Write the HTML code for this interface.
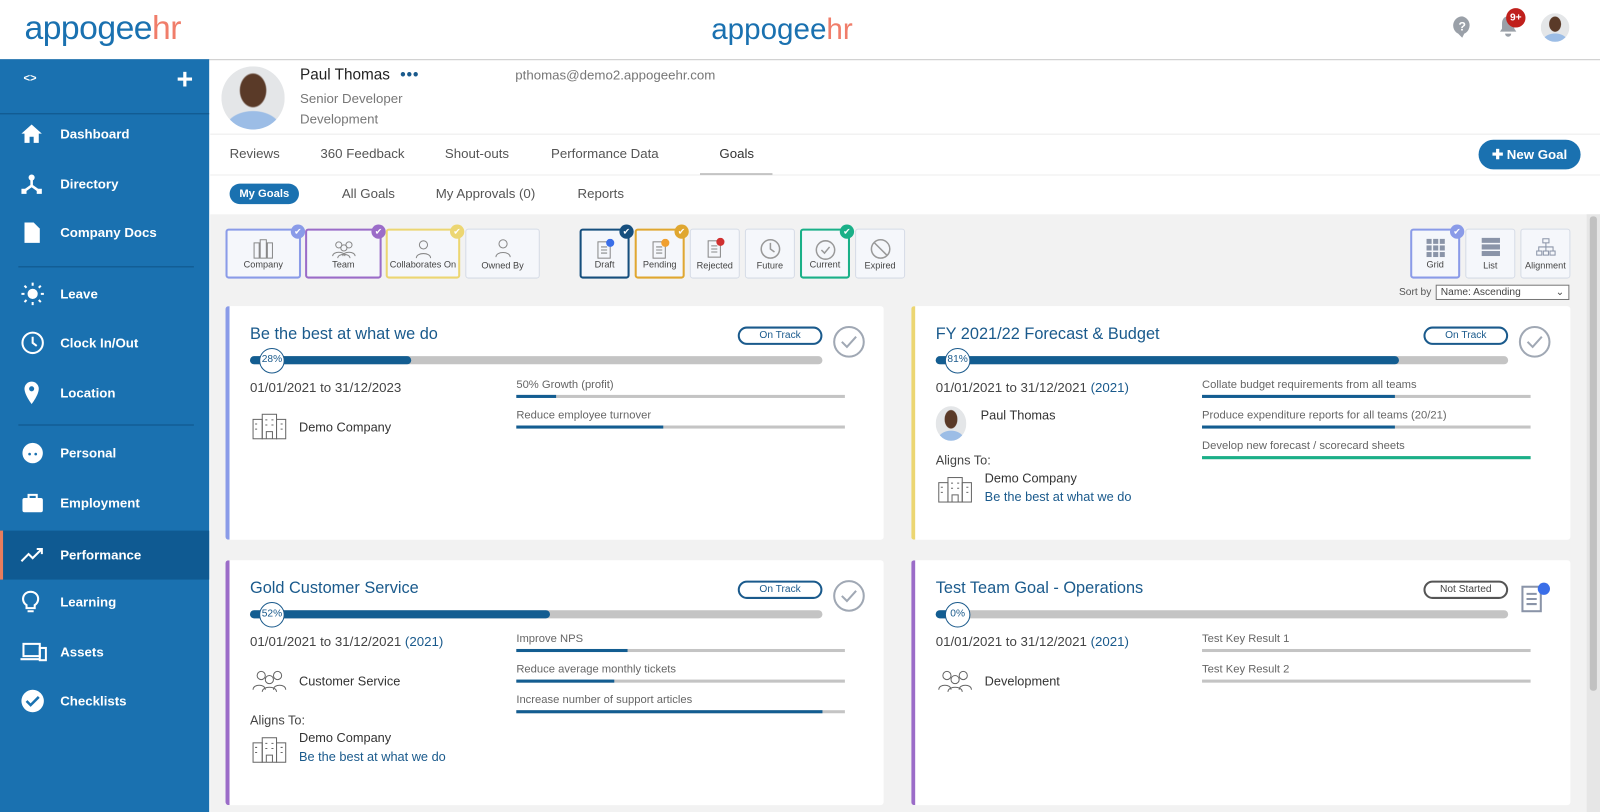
<!DOCTYPE html>
<html><head><meta charset="utf-8"><style>
*{box-sizing:border-box;margin:0;padding:0}
body{width:1600px;height:796px;overflow:hidden;font-family:"Liberation Sans",sans-serif;background:#fff;position:relative;color:#333}
#w{position:absolute;left:0;top:0;width:1568px;height:780px;transform:scale(1.0204);transform-origin:0 0}
.a{position:absolute}
.side{left:0;top:58px;width:205px;height:738px;background:#1a71b0}
.nav{position:absolute;left:0;width:205px;height:48px;color:#fff;font-size:13px;font-weight:bold}
.nav span{position:absolute;left:59px;top:50%;transform:translateY(-50%)}
.nav svg{position:absolute;left:20px;top:50%;transform:translateY(-50%)}
.sep{position:absolute;left:18px;width:172px;height:1px;background:#0f5589}
.tab{position:absolute;top:143px;font-size:13px;color:#555}
.stab{position:absolute;top:182px;font-size:13px;color:#555}
.f{position:absolute;top:224px;height:49px;background:#f5f7fb;border:1px solid #d5dbe6;border-radius:3px;font-size:9px;color:#444;text-align:center}
.f .l{position:absolute;bottom:7px;left:0;right:0}
.f .ic{position:absolute;top:8px;left:50%;transform:translateX(-50%)}
.ck{position:absolute;top:-6px;right:-6px;width:14px;height:14px;border-radius:50%;color:#fff;font-size:9px;line-height:14px;text-align:center}
.card{position:absolute;background:#fff;border-radius:3px;border-left:4px solid}
.t{position:absolute;left:20px;top:19px;font-size:16px;color:#1a5a8c}
.badge{position:absolute;width:83px;height:18px;border:2px solid #1a5a8c;border-radius:9px;font-size:10px;text-align:center;line-height:14px;color:#1a5a8c}
.pb{position:absolute;left:20px;top:49px;width:561px;height:8px;background:#c4c4c4;border-radius:4px}
.pb i{position:absolute;left:0;top:0;height:8px;background:#135d91;border-radius:4px}
.pc{position:absolute;left:29px;top:41px;width:25px;height:25px;border:1.5px solid #1a5a8c;border-radius:50%;background:#fff;font-size:10px;color:#1a5a8c;text-align:center;line-height:22px}
.d{position:absolute;left:20px;top:72px;font-size:13px;color:#444}
.d b{font-weight:normal;color:#1a5a8c}
.kr{position:absolute;width:322px;font-size:11px;color:#666}
.kr i{position:absolute;left:0;top:16px;width:322px;height:3px;background:#c4c4c4}
.kr i u{position:absolute;left:0;top:0;height:3px;background:#135d91}
.txt{position:absolute;font-size:12.5px;color:#333}
.lnk{position:absolute;font-size:12.5px;color:#1a5a8c}
.av{position:absolute;border-radius:50%;background:radial-gradient(ellipse 22% 28% at 50% 38%,#5a3a28 90%,transparent 100%),radial-gradient(ellipse 45% 30% at 50% 100%,#9cbde6 95%,transparent 100%),#e4e6e8}
</style></head><body><div id="w">
<!-- header -->
<div class="a" style="left:24px;top:8px;font-size:33px;color:#1a71b0;letter-spacing:-0.5px">appogee<span style="color:#f07d6a">hr</span></div>
<div class="a" style="left:697px;top:13px;font-size:29px;color:#1a71b0">appogee<span style="color:#f07d6a">hr</span></div>
<div class="a" style="left:0;top:58px;width:1600px;height:1px;background:#c8c8c8"></div>
<svg class="a" style="left:1423px;top:15px" width="20" height="22" viewBox="0 0 20 22"><path d="M10 1a9 9 0 0 0-4 17l4 4 2-4a9 9 0 0 0-2-17z" fill="#9aa0a8"/><text x="10" y="15" font-size="12" font-weight="bold" fill="#fff" text-anchor="middle" font-family="Liberation Sans">?</text></svg>
<svg class="a" style="left:1467px;top:14px" width="22" height="24" viewBox="0 0 22 24"><path d="M11 2c-4 0-6 3-6 7v5l-2 3h16l-2-3V9c0-4-2-7-6-7zM8 19a3 3 0 0 0 6 0z" fill="#9aa0a8"/></svg>
<div class="a" style="left:1476px;top:8px;width:19px;height:19px;border-radius:50%;background:#c0201c;color:#fff;font-size:10px;font-weight:bold;text-align:center;line-height:19px">9+</div>
<div class="av" style="left:1510px;top:13px;width:28px;height:28px"></div>
<!-- sidebar -->
<div class="a side">
<div class="a" style="left:23px;top:13px;color:#fff;font-size:11px;font-weight:bold">&lt;&gt;</div>
<div class="a" style="left:173px;top:4px;color:#fff;font-size:28px;font-weight:bold">+</div>
<div class="a" style="left:0;top:53px;width:205px;height:1px;background:#0f5589"></div>
<div class="nav" style="top:49px"><svg width="22" height="20" viewBox="0 0 22 20"><path d="M11 1L1 10h3v9h5v-6h4v6h5v-9h3z" fill="#fff"/></svg><span>Dashboard</span></div>
<div class="nav" style="top:98px"><svg width="22" height="22" viewBox="0 0 22 22"><circle cx="11" cy="5" r="3" fill="#fff"/><path d="M11 7v6L4 18M11 13l7 5" stroke="#fff" stroke-width="2.5" fill="none"/><rect x="1" y="16" width="5" height="5" fill="#fff"/><rect x="16" y="16" width="5" height="5" fill="#fff"/></svg><span>Directory</span></div>
<div class="nav" style="top:146px"><svg width="22" height="22" viewBox="0 0 22 22"><path d="M4 1h9l6 6v14H4z" fill="#fff"/></svg><span>Company Docs</span></div>
<div class="sep" style="top:203px"></div>
<div class="nav" style="top:206px"><svg width="24" height="24" viewBox="0 0 24 24"><circle cx="12" cy="12" r="5" fill="#fff"/><g stroke="#fff" stroke-width="2"><path d="M12 1v3M12 20v3M1 12h3M20 12h3M4 4l2 2M18 18l2 2M4 20l2-2M18 6l2-2"/></g></svg><span>Leave</span></div>
<div class="nav" style="top:254px"><svg width="24" height="24" viewBox="0 0 24 24"><circle cx="12" cy="12" r="10" stroke="#fff" stroke-width="2" fill="none"/><path d="M12 6v6l4 3" stroke="#fff" stroke-width="2" fill="none"/></svg><span>Clock In/Out</span></div>
<div class="nav" style="top:303px"><svg width="22" height="24" viewBox="0 0 22 24"><path d="M11 1a7 7 0 0 0-7 7c0 6 7 15 7 15s7-9 7-15a7 7 0 0 0-7-7z" fill="#fff"/><circle cx="11" cy="8" r="2.5" fill="#1a71b0"/></svg><span>Location</span></div>
<div class="sep" style="top:358px"></div>
<div class="nav" style="top:362px"><svg width="24" height="24" viewBox="0 0 24 24"><circle cx="12" cy="12" r="10" fill="#fff"/><circle cx="9" cy="13" r="1.3" fill="#1a71b0"/><circle cx="15" cy="13" r="1.3" fill="#1a71b0"/></svg><span>Personal</span></div>
<div class="nav" style="top:411px"><svg width="24" height="22" viewBox="0 0 24 22"><rect x="2" y="6" width="20" height="14" rx="2" fill="#fff"/><path d="M8 6V3h8v3" stroke="#fff" stroke-width="2" fill="none"/></svg><span>Employment</span></div>
<div class="nav" style="top:462px;background:#0f5a92;border-left:3px solid #e87d5e"><svg width="24" height="16" viewBox="0 0 24 16" style="left:17px"><path d="M1 14l7-7 4 4 9-9M16 2h5v5" stroke="#fff" stroke-width="2" fill="none"/></svg><span style="left:56px">Performance</span></div>
<div class="nav" style="top:508px"><svg width="20" height="24" viewBox="0 0 20 24"><path d="M10 2a7 7 0 0 0-4 13v3h8v-3a7 7 0 0 0-4-13z" stroke="#fff" stroke-width="2" fill="none"/><path d="M7 21h6" stroke="#fff" stroke-width="2"/></svg><span>Learning</span></div>
<div class="nav" style="top:557px"><svg width="26" height="20" viewBox="0 0 26 20"><rect x="3" y="2" width="16" height="12" stroke="#fff" stroke-width="2" fill="none"/><path d="M0 17h19" stroke="#fff" stroke-width="2"/><rect x="19" y="6" width="6" height="12" stroke="#fff" stroke-width="2" fill="none"/></svg><span>Assets</span></div>
<div class="nav" style="top:605px"><svg width="24" height="24" viewBox="0 0 24 24"><circle cx="12" cy="12" r="11" fill="#fff"/><path d="M6 12l4 4 8-8" stroke="#1a71b0" stroke-width="2.5" fill="none"/></svg><span>Checklists</span></div>
</div>
<!-- profile -->
<div class="av" style="left:217px;top:65px;width:62px;height:62px"></div>
<div class="a" style="left:294px;top:65px;font-size:15px;color:#222">Paul Thomas <span style="color:#1a5a8c;font-weight:bold;letter-spacing:1px;margin-left:6px">•••</span></div>
<div class="a" style="left:294px;top:89px;font-size:13px;color:#777">Senior Developer</div>
<div class="a" style="left:294px;top:109px;font-size:13px;color:#777">Development</div>
<div class="a" style="left:505px;top:66px;font-size:13px;color:#777">pthomas@demo2.appogeehr.com</div>
<div class="a" style="left:206px;top:131px;width:1394px;height:1px;background:#ececec"></div>
<div class="tab" style="left:225px">Reviews</div>
<div class="tab" style="left:314px">360 Feedback</div>
<div class="tab" style="left:436px">Shout-outs</div>
<div class="tab" style="left:540px">Performance Data</div>
<div class="tab" style="left:705px;color:#333">Goals</div>
<div class="a" style="left:686px;top:170px;width:71px;height:2px;background:#999"></div>
<div class="a" style="left:1449px;top:137px;width:100px;height:29px;border-radius:15px;background:#1a71b0;color:#fff;font-size:13px;font-weight:bold;line-height:29px;text-align:center">✚ New Goal</div>
<div class="a" style="left:206px;top:171px;width:1394px;height:1px;background:#ececec"></div>
<div class="a" style="left:225px;top:180px;width:68px;height:20px;border-radius:10px;background:#1a71b0;color:#fff;font-size:11px;font-weight:bold;text-align:center;line-height:20px">My Goals</div>
<div class="stab" style="left:335px">All Goals</div>
<div class="stab" style="left:427px">My Approvals (0)</div>
<div class="stab" style="left:566px">Reports</div>
<!-- gray area -->
<div class="a" style="left:206px;top:210px;width:1394px;height:586px;background:#f2f2f2"></div>
<div class="a" style="left:1555px;top:210px;width:13px;height:586px;background:#e6e6e6"></div>
<div class="a" style="left:1558px;top:212px;width:7px;height:465px;background:#c1c1c1;border-radius:3px"></div>
<!-- filters -->
<div class="f" style="left:221px;width:74px;border:2px solid #8a9be8"><svg class="ic" width="22" height="20" viewBox="0 0 22 20"><path d="M2 4h5v15H2zM8 1h6v18H8zM15 4h5v15h-5z" stroke="#888" fill="none"/></svg><div class="l">Company</div><div class="ck" style="background:#8a9be8">✔</div></div>
<div class="f" style="left:299px;width:75px;border:2px solid #9b6cc8"><svg class="ic" width="26" height="20" viewBox="0 0 26 20"><circle cx="8" cy="6" r="3" stroke="#888" fill="none"/><circle cx="18" cy="6" r="3" stroke="#888" fill="none"/><circle cx="13" cy="9" r="3" stroke="#888" fill="none"/><path d="M2 17c0-5 12-5 12 0M12 17c0-5 12-5 12 0M7 19c0-5 12-5 12 0" stroke="#888" fill="none"/></svg><div class="l">Team</div><div class="ck" style="background:#9b6cc8">✔</div></div>
<div class="f" style="left:378px;width:73px;border:2px solid #ecd672"><svg class="ic" width="16" height="20" viewBox="0 0 16 20"><circle cx="8" cy="6" r="4" stroke="#888" fill="none"/><path d="M1 19c0-6 14-6 14 0" stroke="#888" fill="none"/></svg><div class="l">Collaborates On</div><div class="ck" style="background:#ecd672">✔</div></div>
<div class="f" style="left:456px;width:73px"><svg class="ic" width="16" height="20" viewBox="0 0 16 20"><circle cx="8" cy="6" r="4" stroke="#888" fill="none"/><path d="M1 19c0-6 14-6 14 0" stroke="#888" fill="none"/></svg><div class="l">Owned By</div></div>
<div class="f" style="left:568px;width:49px;border:2px solid #164f7e"><svg class="ic" width="20" height="22" viewBox="0 0 20 22"><rect x="3" y="3" width="12" height="16" stroke="#888" fill="none"/><path d="M6 8h6M6 11h6M6 14h6" stroke="#888"/><circle cx="15" cy="4" r="4" fill="#3a6ee8"/></svg><div class="l">Draft</div><div class="ck" style="background:#164f7e">✔</div></div>
<div class="f" style="left:622px;width:49px;border:2px solid #e0a730"><svg class="ic" width="20" height="22" viewBox="0 0 20 22"><rect x="3" y="3" width="12" height="16" stroke="#888" fill="none"/><path d="M6 8h6M6 11h6M6 14h6" stroke="#888"/><circle cx="15" cy="4" r="4" fill="#f0a030"/></svg><div class="l">Pending</div><div class="ck" style="background:#e0a730">✔</div></div>
<div class="f" style="left:676px;width:49px"><svg class="ic" width="20" height="22" viewBox="0 0 20 22"><rect x="3" y="3" width="12" height="16" stroke="#888" fill="none"/><path d="M6 8h6M6 11h6M6 14h6" stroke="#888"/><circle cx="15" cy="4" r="4" fill="#d03030"/></svg><div class="l">Rejected</div></div>
<div class="f" style="left:730px;width:49px"><svg class="ic" width="22" height="22" viewBox="0 0 22 22"><circle cx="11" cy="11" r="9" stroke="#999" stroke-width="1.5" fill="none"/><path d="M11 5v6l4 3" stroke="#999" stroke-width="1.5" fill="none"/></svg><div class="l">Future</div></div>
<div class="f" style="left:784px;width:49px;border:2px solid #1ab088"><svg class="ic" width="22" height="22" viewBox="0 0 22 22"><circle cx="11" cy="11" r="9" stroke="#999" stroke-width="1.5" fill="none"/><path d="M7 11l3 3 5-6" stroke="#999" stroke-width="1.5" fill="none"/></svg><div class="l">Current</div><div class="ck" style="background:#1ab088">✔</div></div>
<div class="f" style="left:838px;width:49px"><svg class="ic" width="22" height="22" viewBox="0 0 22 22"><circle cx="11" cy="11" r="9" stroke="#999" stroke-width="1.5" fill="none"/><path d="M5 5l12 12" stroke="#999" stroke-width="1.5"/></svg><div class="l">Expired</div></div>
<div class="f" style="left:1382px;width:49px;border:2px solid #8a9be8"><svg class="ic" width="18" height="18" viewBox="0 0 18 18" fill="#8a94a8"><rect x="0" y="0" width="5" height="5"/><rect x="6.5" y="0" width="5" height="5"/><rect x="13" y="0" width="5" height="5"/><rect x="0" y="6.5" width="5" height="5"/><rect x="6.5" y="6.5" width="5" height="5"/><rect x="13" y="6.5" width="5" height="5"/><rect x="0" y="13" width="5" height="5"/><rect x="6.5" y="13" width="5" height="5"/><rect x="13" y="13" width="5" height="5"/></svg><div class="l">Grid</div><div class="ck" style="background:#8a9be8">✔</div></div>
<div class="f" style="left:1436px;width:49px"><svg class="ic" width="18" height="18" viewBox="0 0 18 18" fill="#8a94a8"><rect y="0" width="18" height="5"/><rect y="6.5" width="18" height="5"/><rect y="13" width="18" height="5"/></svg><div class="l">List</div></div>
<div class="f" style="left:1490px;width:49px"><svg class="ic" width="20" height="18" viewBox="0 0 20 18" stroke="#8a94a8" fill="none"><rect x="7" y="1" width="6" height="4"/><rect x="1" y="13" width="5" height="4"/><rect x="7.5" y="13" width="5" height="4"/><rect x="14" y="13" width="5" height="4"/><path d="M10 5v8M3 13V9h14v4"/></svg><div class="l">Alignment</div></div>
<div class="a" style="left:1371px;top:281px;font-size:10px;color:#555">Sort by</div>
<div class="a" style="left:1407px;top:279px;width:131px;height:15px;border:1px solid #777;background:#fff;font-size:10px;color:#444;padding-left:4px;line-height:13px">Name: Ascending<span style="position:absolute;right:4px">⌄</span></div>

<!-- card 1 -->
<div class="card" style="left:221px;top:300px;width:645px;height:229px;border-color:#8a9be8">
<div class="t">Be the best at what we do</div>
<div class="badge" style="left:498px;top:20px">On Track</div>
<svg class="a" style="left:591px;top:19px" width="32" height="32"><circle cx="16" cy="16" r="14.5" stroke="#a0a8b4" stroke-width="2" fill="none"/><path d="M9 16l5 5 9-10" stroke="#a0a8b4" stroke-width="2" fill="none"/></svg>
<div class="pb"><i style="width:158px"></i></div><div class="pc">28%</div>
<div class="d">01/01/2021 to 31/12/2023</div>
<div class="kr" style="left:281px;top:71px">50% Growth (profit)<i><u style="width:39px"></u></i></div>
<div class="kr" style="left:281px;top:101px">Reduce employee turnover<i><u style="width:144px"></u></i></div>
<svg class="a" style="left:22px;top:105px" width="34" height="26" viewBox="0 0 34 26" stroke="#666" fill="none"><rect x="1" y="6" width="9" height="19"/><rect x="10" y="1" width="14" height="24"/><rect x="24" y="6" width="9" height="19"/><path d="M14 25v-7h6v7"/><path d="M4 10v1M4 15v1M29 10v1M29 15v1M14 6v1M20 6v1M14 11v1M20 11v1" stroke-width="2"/></svg>
<div class="txt" style="left:68px;top:112px">Demo Company</div>
</div>
<!-- card 2 -->
<div class="card" style="left:893px;top:300px;width:646px;height:229px;border-color:#ecd672">
<div class="t">FY 2021/22 Forecast &amp; Budget</div>
<div class="badge" style="left:498px;top:20px">On Track</div>
<svg class="a" style="left:591px;top:19px" width="32" height="32"><circle cx="16" cy="16" r="14.5" stroke="#a0a8b4" stroke-width="2" fill="none"/><path d="M9 16l5 5 9-10" stroke="#a0a8b4" stroke-width="2" fill="none"/></svg>
<div class="pb"><i style="width:454px"></i></div><div class="pc">81%</div>
<div class="d">01/01/2021 to 31/12/2021 <b>(2021)</b></div>
<div class="kr" style="left:281px;top:71px">Collate budget requirements from all teams<i><u style="width:189px"></u></i></div>
<div class="kr" style="left:281px;top:101px">Produce expenditure reports for all teams (20/21)<i><u style="width:189px"></u></i></div>
<div class="kr" style="left:281px;top:131px">Develop new forecast / scorecard sheets<i><u style="width:322px;background:#1ab088"></u></i></div>
<div class="av" style="left:20px;top:98px;width:30px;height:34px"></div>
<div class="txt" style="left:64px;top:100px">Paul Thomas</div>
<div class="txt" style="left:20px;top:144px;color:#444">Aligns To:</div>
<svg class="a" style="left:22px;top:167px" width="34" height="26" viewBox="0 0 34 26" stroke="#666" fill="none"><rect x="1" y="6" width="9" height="19"/><rect x="10" y="1" width="14" height="24"/><rect x="24" y="6" width="9" height="19"/><path d="M14 25v-7h6v7"/><path d="M4 10v1M4 15v1M29 10v1M29 15v1M14 6v1M20 6v1M14 11v1M20 11v1" stroke-width="2"/></svg>
<div class="txt" style="left:68px;top:162px">Demo Company</div>
<div class="lnk" style="left:68px;top:180px">Be the best at what we do</div>
</div>
<!-- card 3 -->
<div class="card" style="left:221px;top:549px;width:645px;height:240px;border-color:#9b6cc8">
<div class="t">Gold Customer Service</div>
<div class="badge" style="left:498px;top:20px">On Track</div>
<svg class="a" style="left:591px;top:19px" width="32" height="32"><circle cx="16" cy="16" r="14.5" stroke="#a0a8b4" stroke-width="2" fill="none"/><path d="M9 16l5 5 9-10" stroke="#a0a8b4" stroke-width="2" fill="none"/></svg>
<div class="pb"><i style="width:294px"></i></div><div class="pc">52%</div>
<div class="d">01/01/2021 to 31/12/2021 <b>(2021)</b></div>
<div class="kr" style="left:281px;top:71px">Improve NPS<i><u style="width:109px"></u></i></div>
<div class="kr" style="left:281px;top:101px">Reduce average monthly tickets<i><u style="width:96px"></u></i></div>
<div class="kr" style="left:281px;top:131px">Increase number of support articles<i><u style="width:300px"></u></i></div>
<svg class="a" style="left:22px;top:106px" width="34" height="24" viewBox="0 0 34 24" stroke="#666" fill="none"><circle cx="9" cy="7" r="4"/><circle cx="25" cy="7" r="4"/><circle cx="17" cy="11" r="4"/><path d="M1 21c0-6 12-6 12 0M21 21c0-6 12-6 12 0M10 23c0-6 14-6 14 0"/></svg>
<div class="txt" style="left:68px;top:112px">Customer Service</div>
<div class="txt" style="left:20px;top:150px;color:#444">Aligns To:</div>
<svg class="a" style="left:22px;top:173px" width="34" height="26" viewBox="0 0 34 26" stroke="#666" fill="none"><rect x="1" y="6" width="9" height="19"/><rect x="10" y="1" width="14" height="24"/><rect x="24" y="6" width="9" height="19"/><path d="M14 25v-7h6v7"/><path d="M4 10v1M4 15v1M29 10v1M29 15v1M14 6v1M20 6v1M14 11v1M20 11v1" stroke-width="2"/></svg>
<div class="txt" style="left:68px;top:167px">Demo Company</div>
<div class="lnk" style="left:68px;top:186px">Be the best at what we do</div>
</div>
<!-- card 4 -->
<div class="card" style="left:893px;top:549px;width:646px;height:240px;border-color:#9b6cc8">
<div class="t">Test Team Goal - Operations</div>
<div class="badge" style="left:498px;top:20px;border-color:#555;color:#444">Not Started</div>
<svg class="a" style="left:592px;top:20px" width="34" height="34" viewBox="0 0 34 34"><rect x="3" y="6" width="18" height="24" stroke="#8a94a8" stroke-width="2" fill="none"/><path d="M7 13h10M7 18h10M7 23h10" stroke="#8a94a8" stroke-width="2"/><circle cx="24" cy="8" r="6" fill="#3a6ee8"/></svg>
<div class="pb"><i style="width:20px"></i></div><div class="pc">0%</div>
<div class="d">01/01/2021 to 31/12/2021 <b>(2021)</b></div>
<div class="kr" style="left:281px;top:71px">Test Key Result 1<i></i></div>
<div class="kr" style="left:281px;top:101px">Test Key Result 2<i></i></div>
<svg class="a" style="left:22px;top:106px" width="34" height="24" viewBox="0 0 34 24" stroke="#666" fill="none"><circle cx="9" cy="7" r="4"/><circle cx="25" cy="7" r="4"/><circle cx="17" cy="11" r="4"/><path d="M1 21c0-6 12-6 12 0M21 21c0-6 12-6 12 0M10 23c0-6 14-6 14 0"/></svg>
<div class="txt" style="left:68px;top:112px">Development</div>
</div>
</div></body></html>
